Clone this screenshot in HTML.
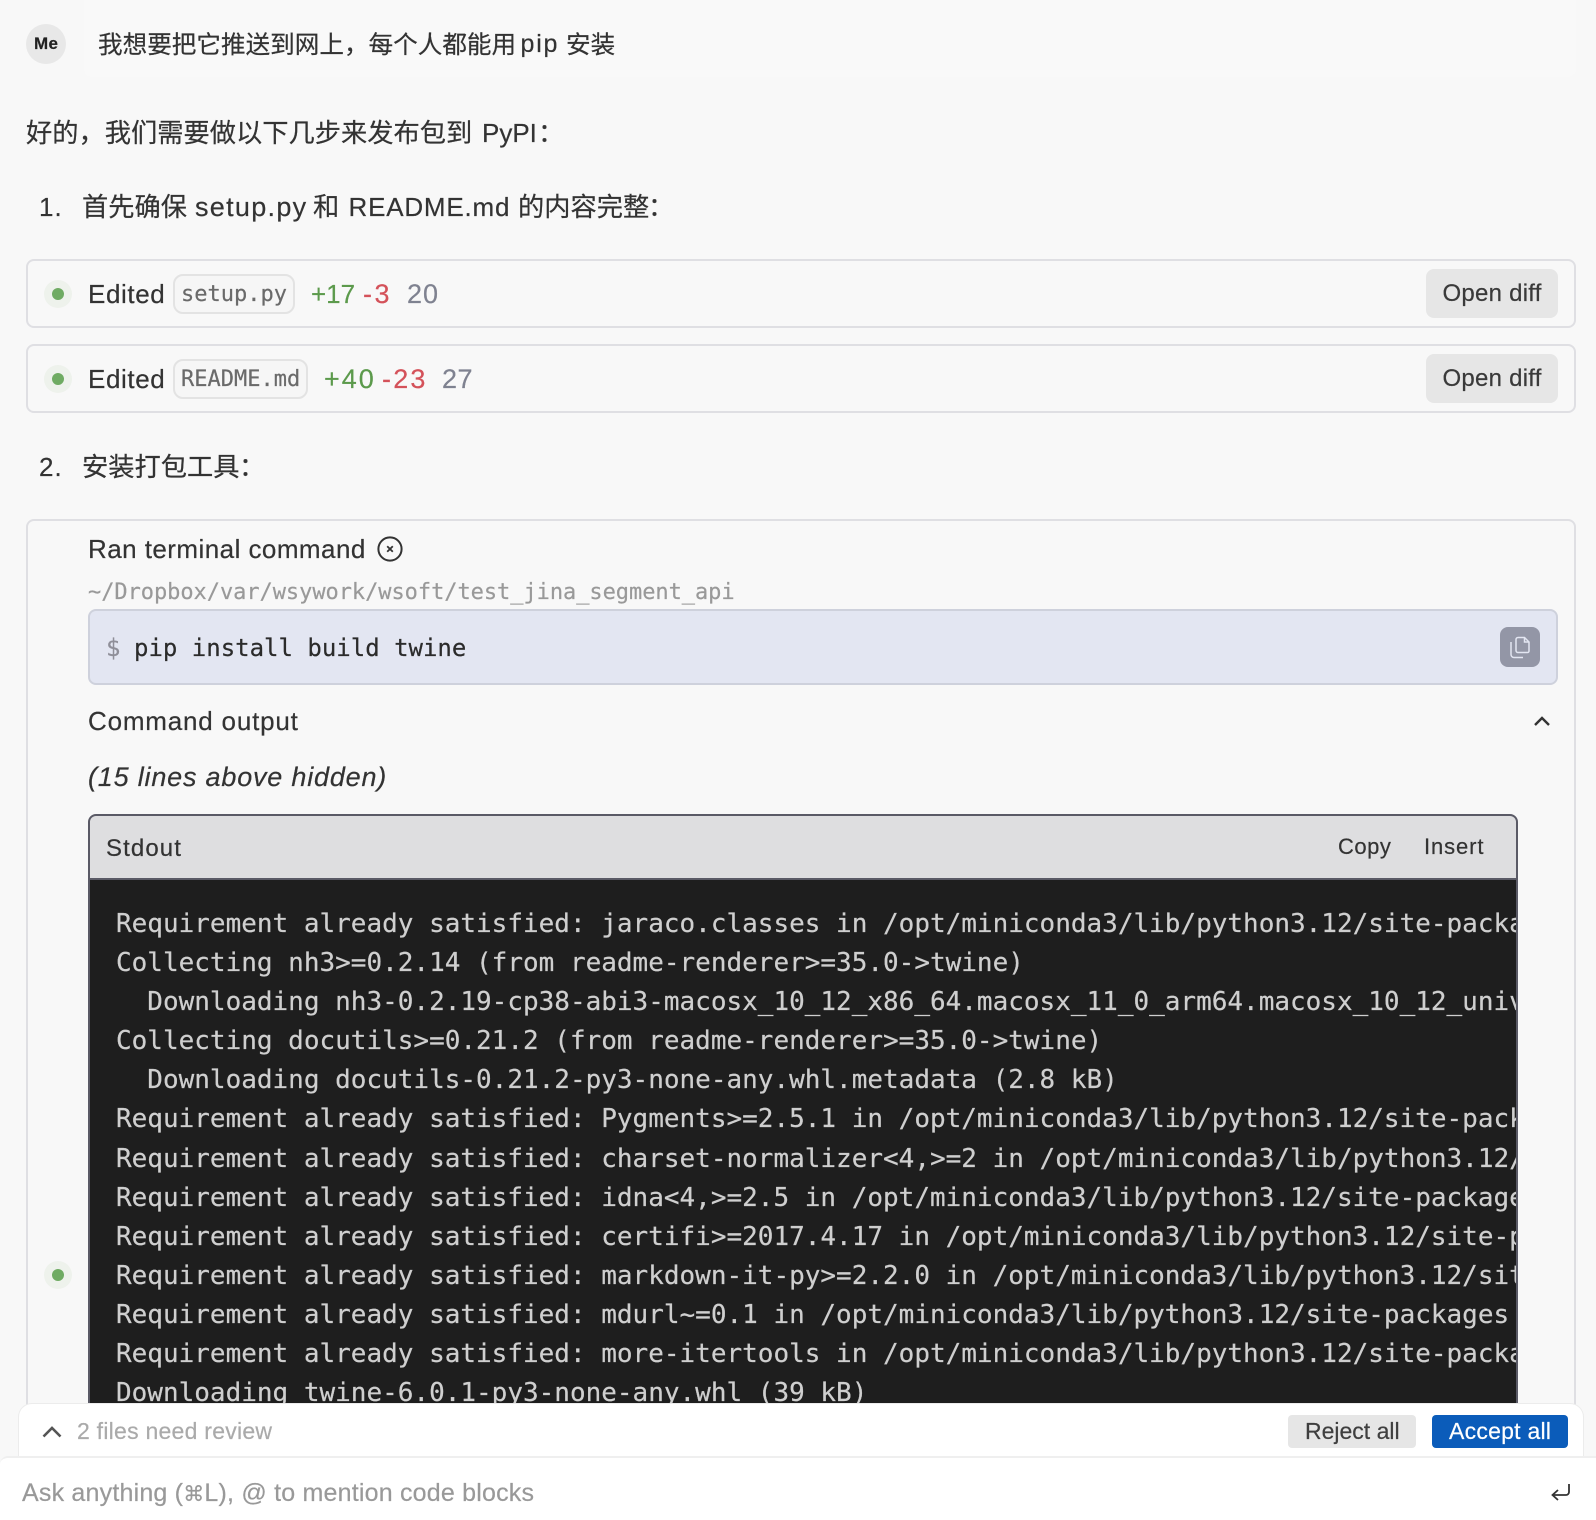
<!DOCTYPE html>
<html lang="zh"><head><meta charset="utf-8"><title>Chat</title>
<style>
html,body{margin:0;padding:0;background:#f8f8f8}
body{width:1596px;height:1520px;position:relative;overflow:hidden;font-family:"Liberation Sans","Noto Sans CJK SC",sans-serif;color:#333;-webkit-text-stroke:.2px}
.t{position:absolute;white-space:pre;line-height:0;font-size:26px}
.c{font-size:26.25px}
.m{font-family:"DejaVu Sans Mono","Liberation Mono",monospace}
.b{position:absolute;box-sizing:border-box}
.card{left:26px;width:1550px;border:2px solid #dfdfe3;border-radius:8px}
.btn{left:1426px;width:132px;height:49px;background:#e6e6e6;border-radius:8px}
.od{left:1442.5px;font-size:24px;letter-spacing:.25px;color:#3a3a3a}
.halo{left:44px;width:28px;height:28px;border-radius:50%;background:#eef2ec}
.dot{left:52px;width:12px;height:12px;border-radius:50%;background:#6fab63}
.pill{left:173px;height:40px;border:2px solid #e3e3e3;border-radius:10px;background:#f6f6f6}
.g{color:#5c9a4c}.r{color:#d4525a}.n{color:#7f8290}
#term{left:90px;top:880px;width:1426px;height:523px;background:#1e1e1e;overflow:hidden}
#term pre{position:absolute;left:26px;top:25.25px;margin:0;font:26px/39.05px "DejaVu Sans Mono","Liberation Mono",monospace;color:#cfcfcf}
svg{position:absolute;overflow:visible}
</style></head><body>

<div class="b" style="left:84px;top:0;width:1492px;height:77px;background:#f9f9f9;border-radius:0 0 8px 8px"></div>
<div class="b" style="left:26px;top:24px;width:40px;height:40px;border-radius:50%;background:#e8e8e8"></div>
<div class="t" style="left:34px;top:44px;font-size:17px;font-weight:700;color:#222;letter-spacing:.3px">Me</div>
<div class="t" style="left:98px;top:45.5px;font-size:24.6px">我想要把它推送到网上&#xFF0C;每个人都能用</div>
<div class="t" style="left:520.5px;top:44px;font-size:25px;letter-spacing:1.8px">pip</div>
<div class="t" style="left:566px;top:45.5px;font-size:24.6px">安装</div>

<div class="t c" style="left:26px;top:132.5px">好的&#xFF0C;我们需要做以下几步来发布包到</div>
<div class="t" style="left:482px;top:132.5px">PyPI</div>
<div class="t" style="left:538px;top:132.5px">&#xFF1A;</div>

<div class="t" style="left:39px;top:206.5px;letter-spacing:1px">1.</div>
<div class="t c" style="left:82px;top:206.5px">首先确保</div>
<div class="t" style="left:195px;top:206.5px;font-size:27px;letter-spacing:1.3px">setup.py</div>
<div class="t c" style="left:313px;top:206.5px">和</div>
<div class="t" style="left:348.5px;top:206.5px;letter-spacing:.8px">README.md</div>
<div class="t c" style="left:518px;top:206.5px">的内容完整</div>
<div class="t" style="left:648px;top:206.5px">&#xFF1A;</div>

<div class="b card" style="top:259px;height:69px"></div>
<div class="b halo" style="top:280px"></div><div class="b dot" style="top:288px"></div>
<div class="t" style="left:88px;top:294px;letter-spacing:.6px">Edited</div>
<div class="b pill" style="top:274px;width:122px"></div>
<div class="t m" style="left:181px;top:295px;font-size:22px;color:#6a6a6a">setup.py</div>
<div class="t g" style="left:311px;top:294px">+17</div>
<div class="t r" style="left:363px;top:294px;font-size:27px;letter-spacing:2.5px">-3</div>
<div class="t n" style="left:407px;top:294px;font-size:27px;letter-spacing:1px">20</div>
<div class="b btn" style="top:269px"></div>
<div class="t od" style="top:293.5px">Open diff</div>

<div class="b card" style="top:344px;height:69px"></div>
<div class="b halo" style="top:365px"></div><div class="b dot" style="top:373px"></div>
<div class="t" style="left:88px;top:379px;letter-spacing:.6px">Edited</div>
<div class="b pill" style="top:359px;width:135px"></div>
<div class="t m" style="left:181px;top:380px;font-size:22px;color:#6a6a6a">README.md</div>
<div class="t g" style="left:324px;top:379px;font-size:27px;letter-spacing:2px">+40</div>
<div class="t r" style="left:382px;top:379px;font-size:27px;letter-spacing:2.2px">-23</div>
<div class="t n" style="left:442px;top:379px;font-size:27px;letter-spacing:.5px">27</div>
<div class="b btn" style="top:354px"></div>
<div class="t od" style="top:378.5px">Open diff</div>

<div class="t" style="left:39px;top:466.5px;letter-spacing:1px">2.</div>
<div class="t c" style="left:82px;top:466.5px">安装打包工具</div>
<div class="t" style="left:239px;top:466.5px">&#xFF1A;</div>

<div class="b" style="left:26px;top:519px;width:1550px;height:960px;border:2px solid #dfdfe3;border-radius:8px"></div>
<div class="t" style="left:88px;top:549px;letter-spacing:.45px">Ran terminal command</div>
<svg style="left:377px;top:536px" width="26" height="26" viewBox="0 0 26 26" fill="none" stroke="#333"><circle cx="13" cy="13" r="11.6" stroke-width="2"/><path d="M10.2 10.2l5.6 5.6M15.8 10.2l-5.6 5.6" stroke-width="1.8"/></svg>
<div class="t m" style="left:88px;top:592.5px;font-size:22px;letter-spacing:-.05px;color:#999">~/Dropbox/var/wsywork/wsoft/test_jina_segment_api</div>

<div class="b" style="left:88px;top:609px;width:1470px;height:76px;background:#e3e6f2;border:2px solid #ced1dc;border-radius:8px"></div>
<div class="t m" style="left:106px;top:648px;font-size:24px;color:#8f8f99">$</div>
<div class="t m" style="left:134px;top:648px;font-size:24px;color:#2b2b2b">pip install build twine</div>
<div class="b" style="left:1500px;top:627px;width:40px;height:40px;border-radius:8px;background:#9396a6"></div>
<svg style="left:1500px;top:627px" width="40" height="40" viewBox="0 0 40 40" fill="none" stroke="#e3e6f2" stroke-width="1.5"><path d="M18 10.5h6.5l4.5 4.5v9a1.5 1.5 0 0 1-1.5 1.5H18a2 2 0 0 1-2-2V12.5a2 2 0 0 1 2-2z"/><path d="M24.5 10.5V15H29"/><path d="M11 15v12.5a3 3 0 0 0 3 3h9"/></svg>

<div class="t" style="left:88px;top:721px;letter-spacing:.8px">Command output</div>
<svg style="left:1534px;top:716px" width="16" height="10" viewBox="0 0 16 10" fill="none" stroke="#333" stroke-width="2.4"><path d="M1 9l7-7 7 7"/></svg>
<div class="t" style="left:88px;top:777px;font-size:27px;font-style:italic;letter-spacing:.8px">(15 lines above hidden)</div>

<div class="b" style="left:88px;top:814px;width:1430px;height:66px;background:#dedee0;border:2px solid #5a5a66;border-radius:8px 8px 0 0"></div>
<div class="t" style="left:106px;top:849px;font-size:24px;letter-spacing:1.1px">Stdout</div>
<div class="t" style="left:1338px;top:847px;font-size:22px;letter-spacing:.5px">Copy</div>
<div class="t" style="left:1424px;top:847px;font-size:22px;letter-spacing:.9px">Insert</div>
<div class="b" style="left:88px;top:878px;width:1430px;height:525px;background:#5a5a66"></div>
<div class="b" id="term"><pre>Requirement already satisfied: jaraco.classes in /opt/miniconda3/lib/python3.12/site-packages
Collecting nh3&gt;=0.2.14 (from readme-renderer&gt;=35.0-&gt;twine)
  Downloading nh3-0.2.19-cp38-abi3-macosx_10_12_x86_64.macosx_11_0_arm64.macosx_10_12_universal2.whl
Collecting docutils&gt;=0.21.2 (from readme-renderer&gt;=35.0-&gt;twine)
  Downloading docutils-0.21.2-py3-none-any.whl.metadata (2.8 kB)
Requirement already satisfied: Pygments&gt;=2.5.1 in /opt/miniconda3/lib/python3.12/site-packages
Requirement already satisfied: charset-normalizer&lt;4,&gt;=2 in /opt/miniconda3/lib/python3.12/site-packages
Requirement already satisfied: idna&lt;4,&gt;=2.5 in /opt/miniconda3/lib/python3.12/site-packages
Requirement already satisfied: certifi&gt;=2017.4.17 in /opt/miniconda3/lib/python3.12/site-packages
Requirement already satisfied: markdown-it-py&gt;=2.2.0 in /opt/miniconda3/lib/python3.12/site-packages
Requirement already satisfied: mdurl~=0.1 in /opt/miniconda3/lib/python3.12/site-packages
Requirement already satisfied: more-itertools in /opt/miniconda3/lib/python3.12/site-packages
Downloading twine-6.0.1-py3-none-any.whl (39 kB)</pre></div>

<div class="b halo" style="top:1261px"></div><div class="b dot" style="top:1269px"></div>

<div class="b" style="left:18px;top:1403px;width:1566px;height:60px;background:#fff;border:1px solid #ececec;border-bottom:0;border-radius:14px 14px 0 0"></div>
<svg style="left:42px;top:1425px" width="20" height="13" viewBox="0 0 20 13" fill="none" stroke="#555" stroke-width="2.6"><path d="M1.5 11.5l8.5-8.5 8.5 8.5"/></svg>
<div class="t" style="left:77px;top:1430.5px;font-size:23px;letter-spacing:.25px;color:#aaa">2 files need review</div>
<div class="b" style="left:1288px;top:1415px;width:128px;height:33px;background:#e6e6e6;border-radius:4px"></div>
<div class="t" style="left:1305px;top:1430.5px;font-size:23px;color:#3f3f3f">Reject all</div>
<div class="b" style="left:1432px;top:1415px;width:136px;height:33px;background:#0b5cba;border-radius:4px"></div>
<div class="t" style="left:1449px;top:1430.5px;font-size:23px;letter-spacing:.25px;color:#fff">Accept all</div>

<div class="b" style="left:0;top:1456px;width:1596px;height:64px;background:#fff;border-top:2px solid #efefef;border-radius:8px 0 0 0"></div>
<div class="t" style="left:22px;top:1493px;font-size:25px;letter-spacing:.2px;color:#999">Ask anything (<span style="font-family:'DejaVu Sans',sans-serif;font-size:21px">⌘</span>L), @ to mention code blocks</div>
<svg style="left:1550px;top:1482px" width="22" height="22" viewBox="0 0 22 22" fill="none" stroke="#333" stroke-width="1.8"><path d="M19 2v8a3 3 0 0 1-3 3H3"/><path d="M8 8l-5.5 5L8 18"/></svg>
</body></html>
